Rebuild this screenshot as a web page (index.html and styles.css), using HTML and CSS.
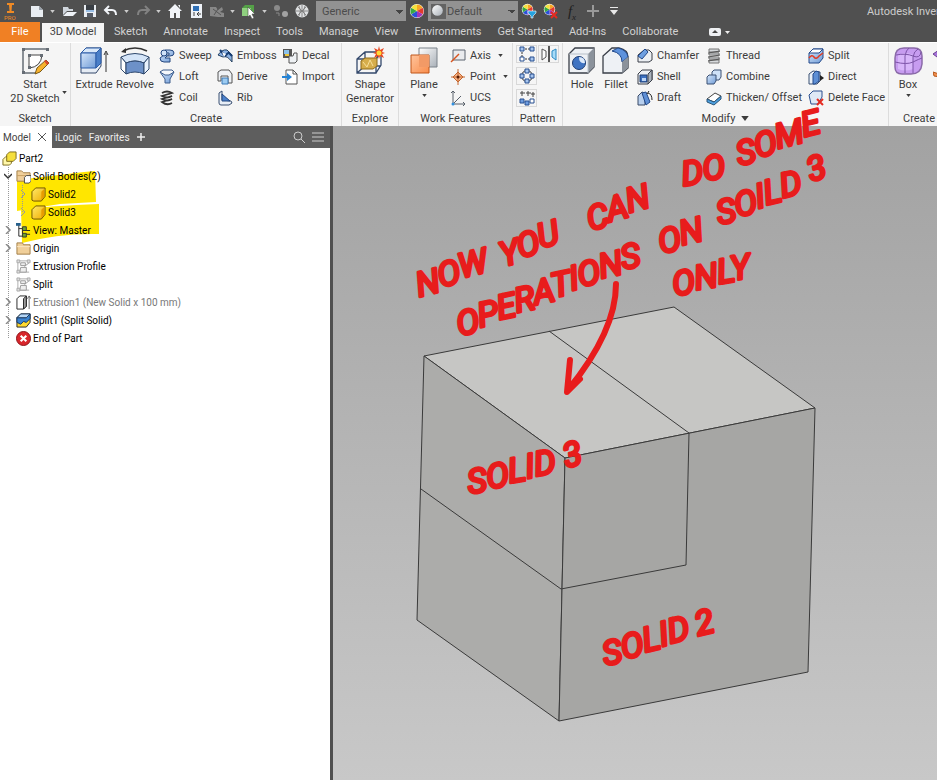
FILE: index.html
```html
<!DOCTYPE html>
<html lang="en">
<head>
  <meta charset="UTF-8">
  <meta name="viewport" content="width=device-width, initial-scale=1.0">
  <title>Autodesk Inventor - Part2</title>
  <link rel="stylesheet" href="styles.css">
</head>
<body>
  <!-- shared symbols -->
  <svg class="defs" width="0" height="0" aria-hidden="true">
    <defs>
      <linearGradient id="blue" x1="0" y1="0" x2="1" y2="1"><stop offset="0" stop-color="#d5e6fa"/><stop offset="1" stop-color="#6f9bd6"/></linearGradient>
      <linearGradient id="orange" x1="0" y1="0" x2="1" y2="1"><stop offset="0" stop-color="#ffc49c"/><stop offset="1" stop-color="#f98d4c"/></linearGradient>
      <linearGradient id="grey" x1="0" y1="0" x2="1" y2="1"><stop offset="0" stop-color="#fff"/><stop offset="1" stop-color="#a9b0b8"/></linearGradient>
      <linearGradient id="gold" x1="0" y1="0" x2="1" y2="1"><stop offset="0" stop-color="#ffe96a"/><stop offset="1" stop-color="#f0ad00"/></linearGradient>
    </defs>
    <symbol id="caret" viewBox="0 0 6 4"><path d="M0 0h6L3 4z" fill="currentColor"/></symbol>
    <symbol id="wheel" viewBox="0 0 16 16">
      <circle cx="8" cy="8" r="7" fill="#fff"/>
      <path d="M8 8L8 1.500A6.500 6.500 0 0 1 13.600 4.700z" fill="#f6a623"/>
      <path d="M8 8L13.600 4.700A6.500 6.500 0 0 1 13.600 11.300z" fill="#e23b2e"/>
      <path d="M8 8L13.600 11.300A6.500 6.500 0 0 1 8 14.500z" fill="#a235b8"/>
      <path d="M8 8L8 14.500A6.500 6.500 0 0 1 2.400 11.300z" fill="#2a50d8"/>
      <path d="M8 8L2.400 11.300A6.500 6.500 0 0 1 2.400 4.700z" fill="#38a943"/>
      <path d="M8 8L2.400 4.700A6.500 6.500 0 0 1 8 1.500z" fill="#f5e23c"/>
    </symbol>
    <symbol id="sketch-small" viewBox="0 0 16 16">
      <path d="M2 2h12M2 2v12M2 14h12" stroke="#aaa" fill="none"/>
      <path d="M5 4h5v3H5zM9 8l5-4M5 9h6v5H4z" fill="#eee" stroke="#999"/>
      <path d="M1 1h3v3H1zM12 1h3v3h-3zM1 12h3v3H1z" fill="#ddd" stroke="#aaa"/>
    </symbol>
    <symbol id="solid" viewBox="0 0 16 16">
      <path d="M1 5L5 1h10v9l-4 5H3l-2-1z" fill="url(#gold)" stroke="#6b5200"/>
      <path d="M11 5v9l3-4V2z" fill="#e89c00"/>
    </symbol>
  </svg>

  <header class="titlebar">
    <svg class="logo" viewBox="0 0 20 22"><path d="M7 3h7v2h-2l-.5 6H14v2H7v-2h2.500L9 5H7z" fill="#f08a24"/><text x="4" y="20">PRO</text></svg>
    <div class="quick">
      <button aria-label="New"><svg class="i16" viewBox="0 0 16 16"><path d="M2 3h8l4 4v7H2z" fill="#e9edf2"/><path d="M10 3v4h4z" fill="#9ca3ac"/></svg></button>
      <button class="drop" aria-label="New options"><svg class="car"><use href="#caret"/></svg></button>
      <button aria-label="Open"><svg class="i16" viewBox="0 0 16 16"><path d="M2 12V4h5l1 2h4v2H6z" fill="#cfd5dc"/><path d="M6 9h10l-4 4H2z" fill="#eef2f7"/></svg></button>
      <button aria-label="Save"><svg class="i16" viewBox="0 0 16 16"><path d="M2 2h12v12H2z" fill="#e9edf2"/><path d="M4 2h8v5H4z" fill="#3a3f45"/><path d="M5 10h6v4H5z" fill="#555b66"/><path d="M4 8h8" stroke="#4b90d9"/></svg></button>
      <button aria-label="Undo"><svg class="i16" viewBox="0 0 16 16"><path d="M6 3L2 7l4 4M2 7h7q4 0 4 5" fill="none" stroke="#f1f4f8" stroke-width="2"/></svg></button>
      <button class="drop" aria-label="Undo list"><svg class="car"><use href="#caret"/></svg></button>
      <button aria-label="Redo"><svg class="i16" viewBox="0 0 16 16"><path d="M10 3l4 4-4 4M14 7H7q-4 0-4 5" fill="none" stroke="#828282" stroke-width="2"/></svg></button>
      <button class="drop" aria-label="Redo list"><svg class="car"><use href="#caret"/></svg></button>
      <button aria-label="Home"><svg class="i16" viewBox="0 0 16 16"><path d="M8 1l7 7h-2v7H9v-5H7v5H3V8H1z" fill="#f1f4f8"/><path d="M11 2h2v3" fill="#f1f4f8"/></svg></button>
      <button aria-label="Drawing"><svg class="i16" viewBox="0 0 16 16"><path d="M3 1h11v14H3z" fill="#eef2f7"/><path d="M5 3h6v5H5z" fill="#2f6fb5"/><path d="M9 11h4M11 9l-2 2 2 2M5 10h2M5 12h2" stroke="#444" fill="none"/></svg></button>
      <button aria-label="Update"><svg class="i16" viewBox="0 0 16 16"><path d="M1 4h6l2 3 4-3 1 3-3 2 4 1v4H9L1 13z" fill="#878787"/><path d="M4 6l8 6M11 3l-6 9" stroke="#555"/></svg></button>
      <button class="drop" aria-label="Update options"><svg class="car"><use href="#caret"/></svg></button>
      <button aria-label="Select"><svg class="i16" viewBox="0 0 16 16"><path d="M1 5l3-3h9v8l-3 3H1z" fill="#54a047"/><path d="M1 5h9v8H1z" fill="#8fd07f"/><path d="M7 4v10l2-2 2 4 2-1-2-4h3z" fill="#fff" stroke="#444" stroke-width=".6"/></svg></button>
      <button class="drop" aria-label="Select options"><svg class="car"><use href="#caret"/></svg></button>
      <button aria-label="Adjust"><svg class="i16" viewBox="0 0 16 16"><circle cx="4" cy="5" r="3" fill="#8a8a8a"/><circle cx="12" cy="11" r="3" fill="#a2a2a2"/><path d="M3 10h3v3" stroke="#888" fill="none"/></svg></button>
      <button aria-label="Material browser"><svg class="i16" viewBox="0 0 16 16"><circle cx="8" cy="8" r="6.500" fill="#dfe1e3"/><path d="M8 2v12M2 8h12M4 4l8 8M12 4l-8 8M5 3q3 4 0 10M11 3q-3 4 0 10" stroke="#777" fill="none" stroke-width=".8"/></svg></button>
    </div>
    <div class="looks">
      <select class="combo" aria-label="Material"><option>Generic</option></select>
      <button aria-label="Appearance browser"><svg class="i16"><use href="#wheel"/></svg></button>
      <div class="swatch-combo">
        <svg class="i14" viewBox="0 0 14 14"><path d="M0 0h14v14H0z" fill="#636363"/><circle cx="6" cy="6" r="5" fill="url(#grey)"/></svg>
        <select class="combo" aria-label="Appearance"><option>Default</option></select>
      </div>
      <button aria-label="Adjust appearance"><svg class="i16" viewBox="0 0 16 16"><use href="#wheel" width="13" height="13"/><path d="M7 8h8v2l-3 3v2h-2v-2L7 10z" fill="#25a3e0" stroke="#fff" stroke-width=".6"/></svg></button>
    </div>
    <div class="quick">
      <button aria-label="Clear appearance"><svg class="i16" viewBox="0 0 16 16"><use href="#wheel" width="13" height="13"/><path d="M8 9l6 6M14 9l-6 6" stroke="#e52b20" stroke-width="2"/></svg></button>
      <button class="fx">f<sub>x</sub></button>
      <button aria-label="Add"><svg class="i16" viewBox="0 0 16 16"><path d="M8 2v12M2 8h12" stroke="#9a9a9a" stroke-width="2"/></svg></button>
      <button aria-label="Customize"><svg class="i16" viewBox="0 0 16 16"><path d="M4 4h8v1H4zM4 7h8l-4 5z" fill="#e8e8e8"/></svg></button>
    </div>
    <span class="app-name">Autodesk Inventor Professional</span>
  </header>

  <nav class="tabs">
    <a class="file" href="#">File</a>
    <a class="active" href="#">3D Model</a>
    <a href="#">Sketch</a>
    <a href="#">Annotate</a>
    <a href="#">Inspect</a>
    <a href="#">Tools</a>
    <a href="#">Manage</a>
    <a href="#">View</a>
    <a href="#">Environments</a>
    <a href="#">Get Started</a>
    <a href="#">Add-Ins</a>
    <a href="#">Collaborate</a>
    <button class="collapse" aria-label="Minimize ribbon"><svg width="22" height="8" viewBox="0 0 22 8"><rect width="12" height="8" rx="2" fill="#eef0f3"/><path d="M3 5h6L6 2z" fill="#444"/><path d="M16 3h5l-2.500 3z" fill="#eee"/></svg></button>
  </nav>

  <div class="ribbon">
    <section class="group sketch">
      <div class="tools">
        <button class="big">
          <svg class="i30" viewBox="0 0 30 30"><path d="M3 3h24M3 3v24M3 27h14" stroke="#666d75" stroke-width="1.500" fill="none"/><path d="M9 9h13q-1 12-13 13z" fill="#fff" stroke="#444"/><path d="M2 2h3v3H2zM26 2h3v3h-3zM2 25h3v3H2zM8 8h3v3H8zM20 8h3v3h-3zM8 20h3v3H8z" fill="#666d75"/><path d="M15 28l2-6 9-8 3 3-9 9z" fill="#f7b22c" stroke="#7a5a18"/><path d="M24 15l3 4 2-2-3-3z" fill="#d9462c"/></svg>
          <span>Start<br>2D Sketch</span>
        </button>
        <svg class="car side"><use href="#caret"/></svg>
      </div>
      <h2>Sketch</h2>
    </section>

    <section class="group create">
      <div class="tools">
        <button class="big">
          <svg class="i30" viewBox="0 0 30 30"><path d="M2 7l5-5h15v18l-5 7H2z" fill="#e6ecf4" stroke="#34486a"/><path d="M2 7l5-5h15l-5 5z" fill="#d9e8f9" stroke="#2c5da8"/><path d="M2 7h15v15H2z" fill="url(#blue)" stroke="#2c5da8"/><path d="M17 7l5-5v15l-5 5z" fill="#4a7fc8" stroke="#2c5da8"/><path d="M27 26V7M25 9l2-4 2 4" stroke="#333" fill="none"/></svg>
          <span>Extrude</span>
        </button>
        <button class="big">
          <svg class="i30" viewBox="0 0 30 30"><path d="M3 5q12-6 24 0" stroke="#333" stroke-width="1.500" fill="none"/><path d="M1 6l5-4v5z" fill="#333"/><path d="M1 11q14-7 28 0l-5 6q-9-4-18 0z" fill="#d5e5f8" stroke="#2e486d"/><path d="M1 11l5 6v11l-5-5z" fill="#fff" stroke="#2e486d"/><path d="M6 17q9-4 18 0v11q-9-4-18 0z" fill="#6d91c8" stroke="#2e486d"/><path d="M24 17l5-6v12l-5 5z" fill="#e8f2fd" stroke="#2e486d"/></svg>
          <span>Revolve</span>
        </button>
        <div class="cols">
          <button><svg class="i16" viewBox="0 0 16 16"><path d="M6 2h5q4 0 4 3t-4 3H8l-2 2h5v4H5q-4 0-4-4l4-3h5V5H6z" fill="url(#blue)" stroke="#23467f"/><circle cx="5" cy="5" r="3" fill="#cfe2f8" stroke="#23467f"/></svg>Sweep</button>
          <button><svg class="i16" viewBox="0 0 16 16"><path d="M1 3h14l-4 7v4H6v-4z" fill="url(#blue)" stroke="#3c5c8c"/><path d="M1 3l3-2h9l2 2-5 3H6z" fill="#f5f8fc" stroke="#3c5c8c"/></svg>Loft</button>
          <button><svg class="i16" viewBox="0 0 16 16"><path d="M3 3q5-3 10 0L3 6q5 3 10 0L3 9q5 3 10 0L3 12q5 4 10 1" stroke="#333" stroke-width="1.800" fill="none"/></svg>Coil</button>
          <button><svg class="i16" viewBox="0 0 16 16"><path d="M1 7q4-6 9-5l5 5v7q-5-7-9-5z" fill="#8db3e4" stroke="#26415f"/><path d="M3 2l5 6 3-3M11 4l4 4" stroke="#173d73" stroke-width="2" fill="none"/><path d="M5 4l4 2-2 3z" fill="#fff"/></svg>Emboss</button>
          <button><svg class="i16" viewBox="0 0 16 16"><path d="M1 3l3-2h8l3 4v9h-4V7H4v5H1z" fill="#eef1f5" stroke="#555"/><path d="M5 9h6v6H5z" fill="#9ccbf1" stroke="#3c7bb8"/></svg>Derive</button>
          <button><svg class="i16" viewBox="0 0 16 16"><path d="M2 3l3-2v9l9 1 1 2-3 2H4q-2 0-2-2z" fill="#e8eef6" stroke="#3b5073"/><path d="M5 4l8 7H5z" fill="#4c82cc" stroke="#23467f"/></svg>Rib</button>
          <button><svg class="i16" viewBox="0 0 16 16"><path d="M1 1h9v9H1z" fill="#555"/><path d="M2 2h5v4H2z" fill="#8ac1ec"/><path d="M3 6h4v2H3z" fill="#ebc43a"/><path d="M7 8h4l1-3h3v8l-2 2H7z" fill="#eef1f4" stroke="#555"/></svg>Decal</button>
          <button><svg class="i16" viewBox="0 0 16 16"><path d="M4 1h7l4 4v10H4z" fill="#fff" stroke="#555"/><path d="M11 1v4h4" fill="none" stroke="#555"/><path d="M0 7h5V4l5 4-5 4V9H0z" fill="#2484d6"/></svg>Import</button>
        </div>
      </div>
      <h2>Create</h2>
    </section>

    <section class="group explore">
      <div class="tools">
        <button class="big">
          <svg class="i30" viewBox="0 0 30 30"><path d="M2 13l8-7h16l-5 7v14H2zM21 13L26 6v13l-5 8M2 13h19M2 27l8-7V6M10 20h16" fill="none" stroke="#34496c" stroke-width="1.300"/><path d="M6 15l4-3h12v8l-4 3H6z" fill="#d6ad4b" stroke="#8d6b1c"/><path d="M8 16l4 5 3-7 3 6" stroke="#f8e09a" fill="none"/><path d="M24 0l1 4 4-2-2 4 3 1-3 1 2 4-4-2-1 3-1-3-4 2 2-4-3-1 3-1-2-4 4 2z" fill="#e8451e"/><circle cx="24" cy="7" r="2.500" fill="#ffd93a"/></svg>
          <span>Shape<br>Generator</span>
        </button>
      </div>
      <h2>Explore</h2>
    </section>

    <section class="group work">
      <div class="tools">
        <button class="big">
          <svg class="i30" viewBox="0 0 30 30"><path d="M10 2h18v19H10z" fill="url(#grey)" stroke="#7b828a"/><path d="M2 9h18v18H2z" fill="url(#orange)" stroke="#c0561b"/><path d="M10 9h10v12H10z" fill="#f29a66"/></svg>
          <span>Plane</span>
          <svg class="car"><use href="#caret"/></svg>
        </button>
        <div class="cols">
          <button><svg class="i16" viewBox="0 0 16 16"><path d="M3 2h12v10H3z" fill="#e9ebee" stroke="#5c6470"/><path d="M1 14L9 6" stroke="#d9541e" stroke-width="1.500"/></svg>Axis <svg class="car"><use href="#caret"/></svg></button>
          <button><svg class="i16" viewBox="0 0 16 16"><path d="M8 3l5 5-5 5-5-5z" fill="#f7b58b" stroke="#c4672f"/><path d="M8 0v16M1 8h14" stroke="#c4672f"/><circle cx="8" cy="8" r="1.500" fill="#5a1f05"/></svg>Point <svg class="car"><use href="#caret"/></svg></button>
          <button><svg class="i16" viewBox="0 0 16 16"><path d="M3 1v13h12M3 14l8-8M1 3l2-2 2 2M13 12l2 2-2 2" fill="none" stroke="#59616b"/><circle cx="3" cy="14" r="1.500" fill="#2f8fe0"/></svg>UCS</button>
        </div>
      </div>
      <h2>Work Features</h2>
    </section>

    <section class="group pattern">
      <div class="tools">
        <button aria-label="Rectangular pattern"><svg class="i16" viewBox="0 0 16 16"><path d="M3 3h10M3 3v10M3 13h10" stroke="#333" stroke-dasharray="2 1"/><path d="M1 1h4v4H1zM11 1h4v4h-4zM11 11h4v4h-4z" fill="#a7c5ee" stroke="#264f90"/><path d="M1 11h4v4H1z" fill="#fff" stroke="#264f90"/></svg></button>
        <button aria-label="Mirror"><svg class="i16" viewBox="0 0 16 16"><path d="M1 3l4 2v6l-4 3z" fill="#fff" stroke="#555"/><path d="M8 0v16" stroke="#222" stroke-width="1.500"/><path d="M15 3l-4 2v6l4 3z" fill="#a8dcf8" stroke="#2a8ac4"/></svg></button>
        <button aria-label="Circular pattern"><svg class="i16" viewBox="0 0 16 16"><circle cx="8" cy="8" r="5.500" fill="none" stroke="#333"/><path d="M6 1h4v4H6zM1 6h4v4H1zM11 6h4v4h-4zM6 11h4v4H6z" fill="#a7c5ee" stroke="#264f90"/></svg></button>
        <button class="row-start" aria-label="Sketch driven pattern"><svg class="i16" viewBox="0 0 16 16"><path d="M3 1v5M1 3h5M9 1v5M7 3h5M14 2v5M12 4h4" stroke="#444"/><path d="M1 9h4v4H1zM6 11h4v4H6z" fill="#6f9de0" stroke="#264f90"/><path d="M11 9h4v4h-4z" fill="#fff" stroke="#264f90"/></svg></button>
      </div>
      <h2>Pattern</h2>
    </section>

    <section class="group modify">
      <div class="tools">
        <button class="big">
          <svg class="i30" viewBox="0 0 30 30"><path d="M2 8l6-6h19v19l-6 6H2z" fill="#eef1f5" stroke="#3a3f48" stroke-width="1.300"/><path d="M21 8l6-6v19l-6 6z" fill="#8b929b"/><path d="M2 8h19v19" fill="none" stroke="#b9c1ca"/><circle cx="12" cy="17" r="6.500" fill="#3f73c2" stroke="#1d3c72"/><path d="M12 11q6 0 6 6-6 1-6-6z" fill="#dbe9fb"/></svg>
          <span>Hole</span>
        </button>
        <button class="big">
          <svg class="i30" viewBox="0 0 30 30"><path d="M2 10l9-8h7q9 2 9 9v11l-6 5H2z" fill="#eef1f5" stroke="#3a3f48" stroke-width="1.300"/><path d="M11 5l6-3q9 2 10 9l-6 5q0-9-10-11z" fill="#5e92dc" stroke="#22498a"/><path d="M21 16l6-5v11l-6 5z" fill="#8b929b"/></svg>
          <span>Fillet</span>
        </button>
        <div class="cols">
          <button><svg class="i16" viewBox="0 0 16 16"><path d="M1 7l6-5h5l3 3v7l-3 2H1z" fill="#eceff3" stroke="#3a3f48"/><path d="M1 8l7-7 3 3-6 7z" fill="#6e9fe0" stroke="#22498a"/></svg>Chamfer</button>
          <button><svg class="i16" viewBox="0 0 16 16"><path d="M1 5l4-4h10v10l-4 4H1z" fill="#eceff3" stroke="#3a3f48"/><path d="M3 6h7v7H3z" fill="#3c70c0" stroke="#1d3c72"/><path d="M5 9h4v3H5z" fill="#bcd5f5"/><path d="M11 5l4-4v10l-4 4z" fill="#aab2bc" stroke="#3a3f48"/></svg>Shell</button>
          <button><svg class="i16" viewBox="0 0 16 16"><path d="M1 6l4-4 3 1v12H1z" fill="#b7cfee" stroke="#3a4a66"/><path d="M5 3l4-1 4 10-4 3z" fill="#5e8fd5" stroke="#22498a"/><path d="M11 3q4 1 4 7M10 4l2-3" fill="none" stroke="#222"/></svg>Draft</button>
          <button><svg class="i16" viewBox="0 0 16 16"><path d="M3 1h10v3H3zM3 5h10v2H3zM3 9h10v2H3zM3 12h10v3H3z" fill="#d7dadd" stroke="#777"/><path d="M2 5l12-2M2 9l12-2M2 13l12-2" stroke="#555"/></svg>Thread</button>
          <button><svg class="i16" viewBox="0 0 16 16"><path d="M6 3l2-2h7v7l-2 3H6z" fill="#cfe1f7" stroke="#3b5073"/><path d="M1 8l2-2h7v6l-2 3H1z" fill="url(#blue)" stroke="#3b5073"/></svg>Combine</button>
          <button><svg class="i16" viewBox="0 0 16 16"><path d="M1 9l8-6 6 3-7 6z" fill="#fff" stroke="#444"/><path d="M1 9l7 3 7-6v3l-7 6-7-3z" fill="#4da0e0" stroke="#2b5578"/></svg>Thicken/ Offset</button>
          <button><svg class="i16" viewBox="0 0 16 16"><path d="M1 5l4-4h10v9l-4 5H1z" fill="url(#blue)" stroke="#22498a"/><path d="M1 5h10l4-4H5z" fill="#fff" stroke="#22498a"/><path d="M1 10q3-4 5-1t5-1l4-3" fill="none" stroke="#e03b24" stroke-width="1.500"/></svg>Split</button>
          <button><svg class="i16" viewBox="0 0 16 16"><path d="M1 5l4-3 7 1v9l-3 3H1z" fill="#e9f0f9" stroke="#3b5073"/><path d="M5 5l3-3 3 1v9l-4 3H5z" fill="#5e8fd5" stroke="#22498a"/><path d="M12 6l4 3-4 3z" fill="#222"/></svg>Direct</button>
          <button><svg class="i16" viewBox="0 0 16 16"><path d="M1 5l4-4h9v6l-4 7H3z" fill="#dfe9f6" stroke="#2b4f8f"/><path d="M9 9l6 6M15 9l-6 6" stroke="#e52b20" stroke-width="2"/></svg>Delete Face</button>
        </div>
      </div>
      <h2>Modify <svg class="car wide"><use href="#caret"/></svg></h2>
    </section>

    <section class="group freeform">
      <div class="tools">
        <button class="big">
          <svg class="i30" viewBox="0 0 30 30"><path d="M2 12q0-10 9-10h10q8 0 8 8v8q-1 10-11 10H9q-7 0-7-7z" fill="#c79cf0" stroke="#8a6aa8" stroke-width="1.500"/><path d="M5 9q8-4 15 0v14q-8 3-15 0z" fill="#d8b6fa"/><path d="M2 16q12 3 18 0t9-4M12 27V10q1-6 4-8M20 27V11q1-6 5-8M3 9q10-2 17 1t8-4" fill="none" stroke="#7d54a8"/></svg>
          <span>Box</span>
          <svg class="car"><use href="#caret"/></svg>
        </button>
        <div class="cols">
          <button aria-label="Face"><svg class="i16" viewBox="0 0 16 16"><path d="M0 6l6-4 8 4-6 6z" fill="#a873dc" stroke="#6b4391"/></svg></button>
          <button aria-label="Convert"><svg class="i16" viewBox="0 0 16 16"><path d="M0 3l9 3 5 6H8L7 8 1 7z" fill="#f09050" stroke="#b5581c"/></svg></button>
        </div>
      </div>
      <h2>Create Freeform</h2>
    </section>
  </div>

  <main class="workspace">
    <aside class="browser">
      <div class="browser-tabs">
        <div class="tab-on">Model <button aria-label="Close"><svg width="8" height="8" viewBox="0 0 8 8"><path d="M0 0l8 8M8 0L0 8" stroke="#555"/></svg></button></div>
        <a href="#">iLogic</a>
        <a href="#">Favorites</a>
        <button aria-label="Add panel"><svg width="8" height="8" viewBox="0 0 8 8"><path d="M4 0v8M0 4h8" stroke="#eee" stroke-width="1.500"/></svg></button>
        <span class="spacer"></span>
        <button aria-label="Search"><svg width="12" height="12" viewBox="0 0 12 12"><circle cx="5" cy="5" r="4" fill="none" stroke="#ccc"/><path d="M8 8l4 4" stroke="#ccc"/></svg></button>
        <button aria-label="Menu"><svg width="12" height="10" viewBox="0 0 12 10"><path d="M0 1h12M0 5h12M0 9h12" stroke="#ccc"/></svg></button>
      </div>
      <div class="tree">
        <!-- highlighter marks behind the rows -->
        <svg class="marker" width="110" height="110" viewBox="0 0 110 110"><path d="M17 22L84 14l11-1 1 31-36 2-43 7z" fill="#ffe600"/><path d="M21 51q30-3 78-5v30q-40-1-77 9z" fill="#ffe600"/></svg>
        <div class="root"><svg class="i14" viewBox="0 0 16 16"><path d="M1 9l3-3h6v7l-2 2H1z" fill="#fff7a8" stroke="#7b6a1c"/><path d="M5 4l3-3h7v7l-3 3H5z" fill="#f5df3c" stroke="#7b6a1c"/></svg>Part2</div>
        <ul>
          <li>
            <div class="node open"><button class="exp" aria-label="Collapse"><svg width="8" height="8" viewBox="0 0 8 8"><path d="M0 2l4 4 4-4" stroke="#333" stroke-width="1.500" fill="none"/></svg></button><svg class="i14" viewBox="0 0 16 16"><path d="M1 13V2h5l2 2h7v9z" fill="#f0cf9a" stroke="#a07c45"/><path d="M1 7h10" stroke="#c59f61"/><path d="M9 9l2-2h5v6l-2 2H9z" fill="#fff" stroke="#444"/></svg>Solid Bodies(2)</div>
            <ul>
              <li><div class="node"><button class="exp" aria-label="Expand"><svg width="8" height="8" viewBox="0 0 8 8"><path d="M2 0l4 4-4 4" stroke="#999" fill="none"/></svg></button><svg class="i14"><use href="#solid"/></svg>Solid2</div></li>
              <li><div class="node"><button class="exp" aria-label="Expand"><svg width="8" height="8" viewBox="0 0 8 8"><path d="M2 0l4 4-4 4" stroke="#999" fill="none"/></svg></button><svg class="i14"><use href="#solid"/></svg>Solid3</div></li>
            </ul>
          </li>
          <li><div class="node"><button class="exp" aria-label="Expand"><svg width="8" height="8" viewBox="0 0 8 8"><path d="M2 0l4 4-4 4" stroke="#888" stroke-width="1.500" fill="none"/></svg></button><svg class="i14" viewBox="0 0 16 16"><path d="M3 2v12h4M3 6h5M7 6v6h8M10 8h5" fill="none" stroke="#222"/><path d="M0 0h5v3H0z" fill="#27608c"/><path d="M7 4h4v4H7zM7 11h4v4H7z" fill="#71a629" stroke="#333"/></svg>View: Master</div></li>
          <li><div class="node"><button class="exp" aria-label="Expand"><svg width="8" height="8" viewBox="0 0 8 8"><path d="M2 0l4 4-4 4" stroke="#888" stroke-width="1.500" fill="none"/></svg></button><svg class="i14" viewBox="0 0 16 16"><path d="M1 14V2h6l1 2h7v10z" fill="#f0cf9a" stroke="#a07c45"/><path d="M1 6h14" stroke="#fbe7c6"/></svg>Origin</div></li>
          <li><div class="node"><span class="exp"></span><svg class="i14"><use href="#sketch-small"/></svg>Extrusion Profile</div></li>
          <li><div class="node"><span class="exp"></span><svg class="i14"><use href="#sketch-small"/></svg>Split</div></li>
          <li><div class="node dim"><button class="exp" aria-label="Expand"><svg width="8" height="8" viewBox="0 0 8 8"><path d="M2 0l4 4-4 4" stroke="#888" stroke-width="1.500" fill="none"/></svg></button><svg class="i14" viewBox="0 0 16 16"><path d="M1 4l3-3h7v11l-3 3H1z" fill="#fff" stroke="#222"/><path d="M8 4l3-3v11l-3 3z" fill="#999" stroke="#222"/><path d="M14 15V2M12 4l2-3 2 3" stroke="#666" fill="none"/></svg>Extrusion1 (New Solid x 100 mm)</div></li>
          <li><div class="node"><button class="exp" aria-label="Expand"><svg width="8" height="8" viewBox="0 0 8 8"><path d="M2 0l4 4-4 4" stroke="#888" stroke-width="1.500" fill="none"/></svg></button><svg class="i14" viewBox="0 0 16 16"><path d="M1 5l4-4h10v9l-4 5H1z" fill="#ffd92e" stroke="#222"/><path d="M1 5h10l4-4v5l-4 4-3-1-3 3-4-2z" fill="#3b83cf" stroke="#16365f"/><path d="M1 5l4-4h10l-4 4z" fill="#b4d5f5" stroke="#16365f"/></svg>Split1 (Split Solid)</div></li>
          <li><div class="node"><span class="exp"></span><svg class="i14" viewBox="0 0 16 16"><circle cx="8" cy="8" r="7.500" fill="#d8262c" stroke="#8a1014"/><path d="M5 5l6 6M11 5l-6 6" stroke="#fff" stroke-width="2.200"/></svg>End of Part</div></li>
        </ul>
      </div>
    </aside>

    <section class="viewport">
      <svg class="scene" width="604" height="654" viewBox="0 0 604 654">
        <g stroke="#3a3a3a" stroke-width="1" stroke-linejoin="round">
          <path d="M91 230L341 181L482 282L232 332z" fill="#c6c6c4"/>
          <path d="M91 230L232 332L226 595L84 494z" fill="#acacaa"/>
          <path d="M232 332L482 282L475 546L226 595z" fill="#a6a6a4"/>
          <path d="M216 205L356 307L353 439L228 463L88 363" fill="none"/>
        </g>
        <g class="ink">
          <text rotate="10" transform="translate(86 171) rotate(-24)">NOW</text>
          <text rotate="10" transform="translate(170 141) rotate(-26)">YOU</text>
          <text rotate="10" transform="translate(257 105) rotate(-25)">CAN</text>
          <text rotate="6" transform="translate(350 60) rotate(-14)">DO</text>
          <text rotate="10" transform="translate(406 40) rotate(-24)">SOME</text>
          <text rotate="10" transform="translate(126 210) rotate(-22)">OPERATIONS</text>
          <text rotate="10" transform="translate(328 128) rotate(-23)">ON</text>
          <text rotate="10" transform="translate(386 99) rotate(-23)">SOILD</text>
          <text transform="translate(478 56) rotate(-18)">3</text>
          <text rotate="6" transform="translate(341 170) rotate(-15)">ONLY</text>
          <text rotate="6" transform="translate(136 368) rotate(-15)">SOLID</text>
          <text transform="translate(233 342) rotate(-14)">3</text>
          <text rotate="6" transform="translate(272 540) rotate(-19)">SOLID</text>
          <text transform="translate(365 510) rotate(-14)">2</text>
          <path class="arrow" d="M283 158Q283 205 235 264M237 234L234 266L247 253"/>
        </g>
      </svg>
    </section>
  </main>
</body>
</html>
```

FILE: styles.css
```css
* {
  box-sizing: border-box;
}
body {
  margin: 0;
  min-height: 100vh;
  display: flex;
  flex-direction: column;
  overflow: hidden;
  font-family: Roboto, sans-serif;
  font-size: 11px;
  line-height: 13px;
  color: #3c3c3c;
}
button {
  border: 0;
  padding: 0;
  background: none;
  font: inherit;
  color: inherit;
  white-space: nowrap;
}
a {
  color: inherit;
  text-decoration: none;
}
svg {
  display: block;
  flex: none;
}
.defs {
  position: absolute;
}
.i14 {
  width: 15px;
  height: 15px;
}
.i16 {
  width: 16px;
  height: 16px;
}
.i30 {
  width: 30px;
  height: 30px;
}
.car {
  width: 5px;
  height: 3px;
}
.car.wide {
  width: 8px;
  height: 5px;
}

/* title bar */
.titlebar {
  display: flex;
  align-items: center;
  height: 22px;
  overflow: hidden;
  background: #505050;
  color: #ccc;
  white-space: nowrap;
}
.logo {
  width: 20px;
  height: 22px;
  margin-right: 9px;
}
.logo text {
  font-size: 6px;
  fill: #f08a24;
}
.quick {
  display: flex;
  align-items: center;
  gap: 5px;
  padding-right: 6px;
}
.drop {
  width: 6px;
}
.looks {
  display: flex;
  align-items: center;
  gap: 3px;
  padding-right: 6px;
}
.combo {
  width: 90px;
  height: 20px;
  border: 0;
  padding: 0 6px;
  appearance: none;
  font: inherit;
  color: #4c4c4c;
  background: linear-gradient(45deg, transparent 50%, #444 50%) no-repeat 80px 9px / 4px 4px,
    linear-gradient(-45deg, transparent 50%, #444 50%) no-repeat 84px 9px / 4px 4px, #929292;
}
.swatch-combo {
  display: grid;
  align-items: center;
}
.swatch-combo > * {
  grid-area: 1 / 1;
}
.swatch-combo svg {
  z-index: 1;
  margin-left: 3px;
}
.swatch-combo .combo {
  padding-left: 19px;
}
.fx {
  width: 16px;
  font: italic 15px/16px "Liberation Serif", serif;
  color: #1e1e1e;
}
.fx sub {
  font-size: 9px;
  line-height: 1px;
}
.app-name {
  margin-left: 239px;
}

/* ribbon tabs */
.tabs {
  display: flex;
  align-items: stretch;
  height: 20px;
  background: #505050;
  color: #d2d2d2;
  line-height: 20px;
  white-space: nowrap;
}
.tabs a {
  padding: 0 8px;
}
.tabs .file {
  width: 40px;
  padding: 0;
  margin-right: 2px;
  text-align: center;
  background: #f08024;
  color: #fff;
}
.tabs .active {
  width: 62px;
  padding: 0;
  margin-right: 2px;
  text-align: center;
  background: #f5f5f5;
  color: #444;
  margin-top: 1px;
  line-height: 18px;
}
.collapse {
  margin-left: 23px;
}

/* ribbon */
.ribbon {
  display: flex;
  height: 84px;
  background: #f5f5f5;
  border-top: 1px solid #fff;
  overflow: hidden;
}
.group {
  flex: none;
  display: flex;
  flex-direction: column;
  border-right: 1px solid #dcdcdc;
}
.group h2 {
  display: flex;
  justify-content: center;
  align-items: center;
  gap: 6px;
  margin: 0;
  height: 16px;
  font-size: 11px;
  font-weight: normal;
  white-space: nowrap;
}
.tools {
  flex: 1;
  display: flex;
  align-items: flex-start;
}
.big {
  display: flex;
  flex-direction: column;
  align-items: center;
  gap: 2px;
  padding-top: 3px;
  line-height: 14px;
}
.cols {
  display: grid;
  grid-template-rows: repeat(3, 21px);
  grid-auto-flow: column;
  padding-top: 2px;
}
.cols button {
  display: flex;
  align-items: center;
  gap: 4px;
}
.sketch {
  width: 71px;
}
.sketch .tools {
  padding-left: 8px;
}
.sketch .big {
  width: 54px;
}
.side {
  align-self: flex-end;
  margin-bottom: 16px;
}
.create {
  width: 271px;
}
.create .tools {
  padding-left: 4px;
}
.create .big {
  width: 38px;
  margin-right: 3px;
}
.create .cols {
  margin-left: 2px;
  grid-template-columns: 58px 65px 54px;
}
.explore {
  width: 57px;
}
.explore .tools {
  justify-content: center;
}
.work {
  width: 114px;
}
.work .tools {
  padding-left: 8px;
}
.work .big {
  width: 34px;
  margin-right: 9px;
}
.work .car {
  margin-left: 3px;
}
.work .big .car {
  margin-left: 0;
}
.pattern {
  width: 50px;
}
.pattern .tools {
  display: grid;
  grid-template-columns: 21px 21px;
  grid-auto-rows: 21px;
  gap: 1px;
  padding: 2px 0 0 3px;
}
.pattern button {
  display: grid;
  place-items: center;
  border: 1px solid #d8d8d8;
}
.row-start {
  grid-column: 1;
}
.modify {
  width: 326px;
}
.modify .tools {
  padding-left: 2px;
}
.modify .big {
  width: 34px;
}
.modify .cols {
  margin-left: 4px;
  grid-template-columns: 69px 102px 76px;
}
.freeform .tools {
  padding-left: 4px;
}
.freeform .cols {
  margin-left: 10px;
}
.freeform h2 {
  padding-left: 14px;
}

/* model browser */
.workspace {
  flex: 1;
  display: flex;
}
.browser {
  flex: 0 0 333px;
  display: flex;
  flex-direction: column;
  border-right: 3px solid #505050;
  background: #fff;
}
.browser-tabs {
  display: flex;
  align-items: center;
  gap: 7px;
  height: 22px;
  padding-right: 6px;
  background: #5e5e5e;
  color: #eee;
}
.tab-on {
  display: flex;
  align-items: center;
  justify-content: space-between;
  align-self: stretch;
  width: 52px;
  margin-right: -4px;
  padding: 0 6px 0 3px;
  background: #fff;
  color: #444;
}
.browser-tabs, .tree {
  font-size: 10px;
}
.spacer {
  flex: 1;
}
.tree {
  position: relative;
  flex: 1;
  padding-top: 1px;
  color: #000;
}
.marker {
  position: absolute;
  left: 0;
  top: 10px;
}
.root, .node {
  position: relative;
  display: flex;
  align-items: center;
  gap: 2px;
  height: 18px;
  white-space: nowrap;
}
.root {
  padding-left: 2px;
}
.tree ul {
  list-style: none;
  margin: 0;
  padding: 0 0 0 4px;
  background: repeating-linear-gradient(#999 0 1px, transparent 1px 2px) no-repeat 8px 0 / 1px calc(100% - 9px);
}
.tree ul ul {
  padding-left: 15px;
  background-position: 18px 0;
  position: relative;
}
.exp {
  width: 10px;
  height: 8px;
}
.dim {
  color: #777;
}

/* 3D view */
.viewport {
  flex: 1;
  min-width: 0;
  background: linear-gradient(#a2a2a2, #c8c8c8);
}
.scene {
  position: relative;
  overflow: visible;
}
.ink text {
  font-size: 34px;
  font-style: italic;
  fill: #e81c1c;
  stroke: #e81c1c;
  stroke-width: 3px;
  stroke-linejoin: round;
}
.arrow {
  fill: none;
  stroke: #e81c1c;
  stroke-width: 6px;
  stroke-linecap: round;
  stroke-linejoin: round;
}
```
